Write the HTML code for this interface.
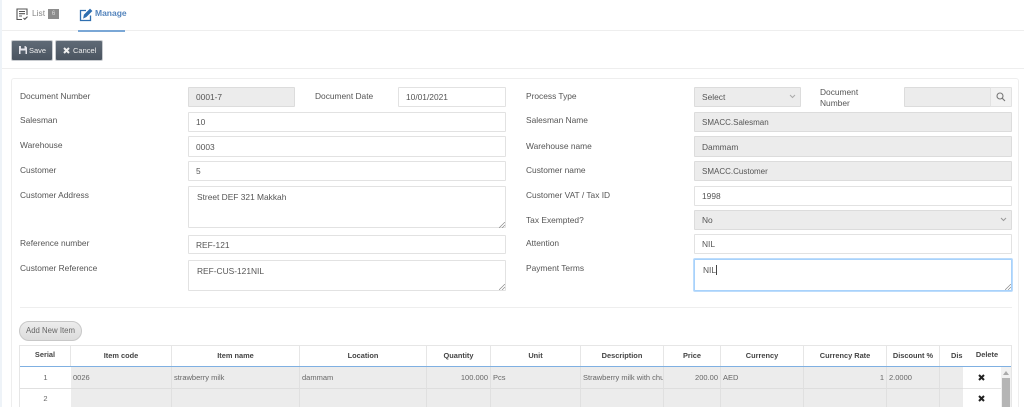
<!DOCTYPE html>
<html>
<head>
<meta charset="utf-8">
<style>
html,body{margin:0;padding:0;width:1024px;height:407px;overflow:hidden;background:#fff}
body{position:relative;font-family:"Liberation Sans","DejaVu Sans",sans-serif;font-size:8.3px;color:#555}
#w{position:absolute;left:0;top:0;width:1024px;height:407px;overflow:hidden;filter:blur(.3px)}
#w div,#w span.a,#w svg{position:absolute;box-sizing:border-box}
.l{color:#555;font-size:8.4px;line-height:11px;white-space:nowrap}
.i{border:1px solid #e2e2e2;background:#fff;border-radius:1px;padding-left:7px;color:#555;font-size:8.4px;display:flex;align-items:center;white-space:nowrap}
.g{background:#ececec;border-color:#dcdcdc}
.ta{align-items:flex-start;padding-top:5px;padding-left:8px}
.th{top:345px;height:21px;border-right:1px solid #e6e6e6;text-align:center;font-weight:bold;font-size:7.4px;line-height:21px;color:#444;white-space:nowrap;overflow:hidden}
.c{height:22px;background:#ececec;border-right:1px solid #e0e0e0;border-bottom:1px solid #dedede;font-size:7.5px;line-height:21px;color:#666;padding:0 2px;white-space:nowrap;overflow:hidden}
.btn{top:40px;height:21px;background:linear-gradient(#5f6a76,#4a5460);border:1px solid #c9ccd0;border-radius:2px;color:#eee;font-size:7.5px;line-height:19px;white-space:nowrap}
</style>
</head>
<body>
<div id="w">
<div style="left:0;top:0;width:2px;height:407px;background:#eef3f8"></div>
<svg style="left:16px;top:8px" width="13" height="13" viewBox="0 0 13 13" fill="none" stroke="#555" stroke-width="1.1"><path d="M6 11.5H1V1h10v6M3 3.5h6M3 5.7h6M3 8h3M7.5 10l1.3 1.3 2.7-2.7"/></svg>
<div style="left:32px;top:7px;color:#888;font-size:8.4px;line-height:13px">List</div>
<div style="left:48px;top:9px;width:11px;height:10px;background:#8c8c8c;color:#ddd;font-size:6px;line-height:10px;text-align:center">6</div>
<svg style="left:79px;top:8px" width="14" height="14" viewBox="0 0 14 14" fill="none" stroke="#2f6fb0" stroke-width="1.3"><path d="M11.5 7.5V12.5H1.5V2.5H7"/><path d="M5 9.5l.5-2.5L11 1.5l1.5 1.5L7 8.5z" fill="#2f6fb0"/></svg>
<div style="left:95px;top:7px;color:#5585bd;font-size:8.5px;font-weight:bold;line-height:13px">Manage</div>
<div style="left:2px;top:30px;width:1022px;height:1px;background:#eeeeee"></div>
<div style="left:78px;top:30px;width:47px;height:2px;background:#7aa7d6"></div>

<div class="btn" style="left:11px;width:42px">
<svg style="left:7px;top:5px" width="8" height="8" viewBox="0 0 8 8"><path d="M0 0h6.5L8 1.5V8H0z" fill="#e4e4ea"/><path d="M2 0h3.5v2.5H2zM1.5 4.5h5V8h-5z" fill="#56606c"/></svg>
<span style="position:absolute;left:17px">Save</span></div>
<div class="btn" style="left:55px;width:48px">
<svg style="left:7px;top:6px" width="7" height="7" viewBox="0 0 7 7" stroke="#f0f0f0" stroke-width="2"><path d="M1 1l5 5M6 1L1 6"/></svg>
<span style="position:absolute;left:17px">Cancel</span></div>
<div style="left:2px;top:68px;width:1022px;height:1px;background:#eeeeee"></div>

<div style="left:11px;top:78px;width:1008px;height:340px;border:1px solid #eeeeee;border-radius:3px;background:#fff"></div>

<div class="l" style="left:20px;top:91px">Document Number</div>
<div class="i g" style="left:188px;top:87px;width:107px;height:20px">0001-7</div>
<div class="l" style="left:315px;top:91px">Document Date</div>
<div class="i" style="left:398px;top:87px;width:108px;height:20px">10/01/2021</div>
<div class="l" style="left:20px;top:115px">Salesman</div>
<div class="i" style="left:188px;top:112px;width:318px;height:20px">10</div>
<div class="l" style="left:20px;top:140px">Warehouse</div>
<div class="i" style="left:188px;top:136px;width:318px;height:21px">0003</div>
<div class="l" style="left:20px;top:165px">Customer</div>
<div class="i" style="left:188px;top:161px;width:318px;height:20px">5</div>
<div class="l" style="left:20px;top:190px">Customer Address</div>
<div class="i ta" style="left:188px;top:186px;width:318px;height:42px">Street DEF 321 Makkah</div>
<div class="l" style="left:20px;top:238px">Reference number</div>
<div class="i" style="left:188px;top:235px;width:318px;height:19px">REF-121</div>
<div class="l" style="left:20px;top:263px">Customer Reference</div>
<div class="i ta" style="left:188px;top:260px;width:318px;height:31px">REF-CUS-121NIL</div>

<div class="l" style="left:526px;top:91px">Process Type</div>
<div class="i g" style="left:694px;top:87px;width:107px;height:20px">Select</div>
<svg style="left:789px;top:94px" width="7" height="5" viewBox="0 0 7 5" fill="none" stroke="#aaa"><path d="M1 1l2.5 2.5L6 1"/></svg>
<div class="l" style="left:820px;top:87px">Document<br>Number</div>
<div class="i g" style="left:904px;top:87px;width:87px;height:20px"></div>
<div class="i" style="left:990px;top:87px;width:22px;height:20px;padding:0;background:#f2f2f2"></div>
<svg style="left:996px;top:92px" width="10" height="10" viewBox="0 0 10 10" fill="none" stroke="#777" stroke-width="1.1"><circle cx="4" cy="4" r="3"/><path d="M6.2 6.2L9 9"/></svg>
<div class="l" style="left:526px;top:115px">Salesman Name</div>
<div class="i g" style="left:694px;top:112px;width:318px;height:20px;font-size:8px">SMACC.Salesman</div>
<div class="l" style="left:526px;top:141px">Warehouse name</div>
<div class="i g" style="left:694px;top:136px;width:318px;height:21px">Dammam</div>
<div class="l" style="left:526px;top:165px">Customer name</div>
<div class="i g" style="left:694px;top:161px;width:318px;height:20px;font-size:8px">SMACC.Customer</div>
<div class="l" style="left:526px;top:190px">Customer VAT / Tax ID</div>
<div class="i" style="left:694px;top:186px;width:318px;height:20px">1998</div>
<div class="l" style="left:526px;top:215px">Tax Exempted?</div>
<div class="i g" style="left:694px;top:210px;width:318px;height:20px">No</div>
<svg style="left:1000px;top:217px" width="7" height="5" viewBox="0 0 7 5" fill="none" stroke="#999"><path d="M1 1l2.5 2.5L6 1"/></svg>
<div class="l" style="left:526px;top:238px">Attention</div>
<div class="i" style="left:694px;top:234px;width:318px;height:20px">NIL</div>
<div class="l" style="left:526px;top:263px">Payment Terms</div>
<div class="i ta" style="left:694px;top:259px;width:318px;height:32px;border-color:#a8d2fb;box-shadow:0 0 0 1px #bcdcfc">NIL<span style="display:inline-block;width:1px;height:10px;background:#444"></span></div>

<svg style="left:499px;top:222px" width="6" height="6" viewBox="0 0 6 6" stroke="#888" stroke-width=".7"><path d="M0 6L6 0M3 6L6 3"/></svg>
<svg style="left:499px;top:284px" width="6" height="6" viewBox="0 0 6 6" stroke="#888" stroke-width=".7"><path d="M0 6L6 0M3 6L6 3"/></svg>
<svg style="left:1005px;top:284px" width="6" height="6" viewBox="0 0 6 6" stroke="#888" stroke-width=".7"><path d="M0 6L6 0M3 6L6 3"/></svg>

<div style="left:20px;top:307px;width:992px;height:1px;background:#eeeeee"></div>
<div style="left:19px;top:321px;width:63px;height:20px;background:linear-gradient(#ececec,#dcdcdc);border:1px solid #c8c8c8;border-radius:10px;text-align:center;font-size:7.8px;line-height:18px;color:#666;white-space:nowrap">Add New Item</div>

<div style="left:19px;top:345px;width:993px;height:1px;background:#e6e6e6"></div>
<div style="left:19px;top:345px;width:1px;height:62px;background:#e6e6e6"></div>
<div style="left:1011px;top:345px;width:1px;height:62px;background:#e6e6e6"></div>

<div class="th" style="left:20px;width:51px;line-height:20px">Serial</div>
<div class="th" style="left:71px;width:101px">Item code</div>
<div class="th" style="left:172px;width:128px">Item name</div>
<div class="th" style="left:300px;width:127px">Location</div>
<div class="th" style="left:427px;width:64px">Quantity</div>
<div class="th" style="left:491px;width:90px">Unit</div>
<div class="th" style="left:581px;width:83px">Description</div>
<div class="th" style="left:664px;width:57px">Price</div>
<div class="th" style="left:721px;width:83px">Currency</div>
<div class="th" style="left:804px;width:83px">Currency Rate</div>
<div class="th" style="left:887px;width:53px">Discount %</div>
<div class="th" style="left:940px;width:23px;border:0;text-align:left;padding-left:11px">Dis</div>
<div class="th" style="left:963px;width:48px;border:0;line-height:20px">Delete</div>
<div style="left:20px;top:366px;width:991px;height:1px;background:#7fb0e2"></div>

<div class="c" style="left:71px;top:367px;width:101px">0026</div>
<div class="c" style="left:172px;top:367px;width:128px">strawberry milk</div>
<div class="c" style="left:300px;top:367px;width:127px">dammam</div>
<div class="c" style="left:427px;top:367px;width:64px;text-align:right">100.000</div>
<div class="c" style="left:491px;top:367px;width:90px">Pcs</div>
<div class="c" style="left:581px;top:367px;width:83px">Strawberry milk with chur</div>
<div class="c" style="left:664px;top:367px;width:57px;text-align:right">200.00</div>
<div class="c" style="left:721px;top:367px;width:83px">AED</div>
<div class="c" style="left:804px;top:367px;width:83px;text-align:right">1</div>
<div class="c" style="left:887px;top:367px;width:53px">2.0000</div>
<div class="c" style="left:940px;top:367px;width:23px;border-right:0"></div>

<div class="c" style="left:71px;top:389px;width:101px"></div>
<div class="c" style="left:172px;top:389px;width:128px"></div>
<div class="c" style="left:300px;top:389px;width:127px"></div>
<div class="c" style="left:427px;top:389px;width:64px"></div>
<div class="c" style="left:491px;top:389px;width:90px"></div>
<div class="c" style="left:581px;top:389px;width:83px"></div>
<div class="c" style="left:664px;top:389px;width:57px"></div>
<div class="c" style="left:721px;top:389px;width:83px"></div>
<div class="c" style="left:804px;top:389px;width:83px"></div>
<div class="c" style="left:887px;top:389px;width:53px"></div>
<div class="c" style="left:940px;top:389px;width:23px;border-right:0"></div>

<div style="left:20px;top:367px;width:51px;height:22px;border-bottom:1px solid #e0e0e0;text-align:center;font-size:7.5px;line-height:21px;color:#666">1</div>
<div style="left:20px;top:389px;width:51px;height:18px;text-align:center;font-size:7.5px;line-height:20px;color:#666">2</div>

<div style="left:963px;top:367px;width:38px;height:22px;background:#fff;border-bottom:1px solid #e6e6e6"></div>
<div style="left:963px;top:389px;width:38px;height:18px;background:#fff"></div>
<svg style="left:978px;top:374px" width="7" height="7" viewBox="0 0 7 7" stroke="#222" stroke-width="2"><path d="M1 1l5 5M6 1L1 6"/></svg>
<svg style="left:978px;top:395px" width="7" height="7" viewBox="0 0 7 7" stroke="#222" stroke-width="2"><path d="M1 1l5 5M6 1L1 6"/></svg>

<div style="left:1001px;top:367px;width:10px;height:40px;background:#f1f1f1"></div>
<div style="left:1002px;top:378px;width:8px;height:29px;background:#b5b5b5"></div>
<svg style="left:1003px;top:371px" width="6" height="4" viewBox="0 0 6 4"><path d="M3 0l3 4H0z" fill="#aaa"/></svg>
</div>
</body>
</html>
